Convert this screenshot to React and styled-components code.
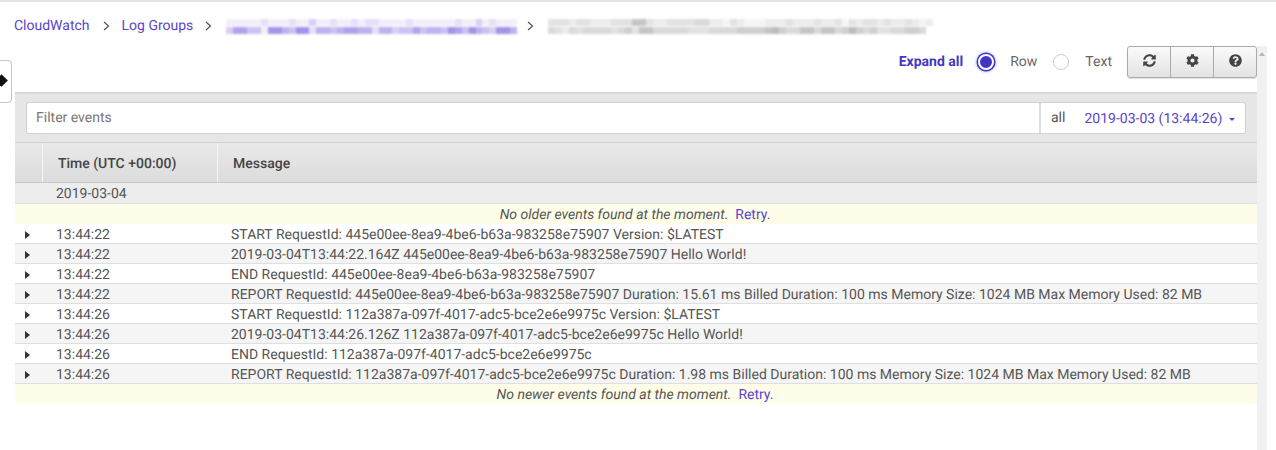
import React from "react";
import styled, { createGlobalStyle } from "styled-components";
import { FaSyncAlt, FaCog, FaQuestionCircle } from "react-icons/fa";

const Global = createGlobalStyle`
  html, body {
    margin: 0;
    background: #ffffff;
    font-family: Roboto, "Liberation Sans", sans-serif;
    color: #555555;
    overflow: hidden;
    text-rendering: geometricPrecision;
  }
`;

const Page = styled.div`
  position: relative;
  width: 1276px;
  height: 450px;
  border-top: 2px solid #e3e3e3;
  box-sizing: border-box;
  overflow: hidden;
`;

const Breadcrumb = styled.nav`
  display: flex;
  align-items: center;
  height: 43px;
  padding: 5px 0 0 14px;
  box-sizing: border-box;
  font-size: 14px;
`;

const Crumb = styled.a`
  color: #5a45c8;
`;

const Chevron = styled.svg`
  width: 7px;
  height: 10px;
  margin: 0 ${(props) => props.$right}px 0 ${(props) => props.$left}px;
  flex: none;
`;

const Redacted = styled.div`
  display: flex;
  flex-direction: column;
  gap: 1px;
  filter: blur(1.2px);
`;

const RedactedRow = styled.div`
  display: flex;
  height: 7px;
`;

const RedactedCell = styled.span`
  width: ${(props) => props.$size}px;
  flex: none;
`;

const Shell = styled.div`
  display: flex;
  margin-left: 15px;
  height: 405px;
`;

const Main = styled.main`
  width: 1242px;
  flex: none;
`;

const Scrollbar = styled.div`
  position: relative;
  width: 10px;
  margin-top: 1px;
  background: #f1f1f1;
  &::before {
    content: "";
    position: absolute;
    top: 6px;
    left: 2px;
    border: 3px solid transparent;
    border-top: 0;
    border-bottom: 4px solid #b5b5b5;
  }
`;

const Toolbar = styled.div`
  display: flex;
  align-items: center;
  justify-content: flex-end;
  height: 47px;
  padding-bottom: 14px;
  box-sizing: border-box;
`;

const ExpandAll = styled.a`
  color: #4338c2;
  font-size: 14px;
  font-weight: 700;
  margin-right: 15px;
`;

const RadioOption = styled.label`
  display: flex;
  align-items: center;
  font-size: 14px;
  line-height: 18px;
  color: #666666;
  margin-right: ${(props) => props.$gap}px;
  padding-top: 1px;
`;

const RadioDot = styled.span`
  width: 16px;
  height: 16px;
  border-radius: 50%;
  box-sizing: border-box;
  margin-right: 16px;
  background: ${(props) => (props.$checked ? "#3f36c4" : "#ffffff")};
  border: ${(props) => (props.$checked ? "2px solid #ffffff" : "1.5px solid #cccccc")};
  box-shadow: ${(props) => (props.$checked ? "0 0 0 1.5px #3f36c4, 0 0 3px 2px #b9b6ee" : "none")};
`;

const ButtonGroup = styled.div`
  display: flex;
  height: 30px;
  border: 1px solid #aaaaaa;
  border-radius: 3px;
  background: linear-gradient(#fafafa, #e3e3e3);
  box-shadow: 0 1px 1px rgba(0, 0, 0, 0.12);
`;

const ToolButton = styled.button`
  width: 43px;
  padding: 0 0 3px;
  border: 0;
  border-right: 1px solid #aaaaaa;
  background: transparent;
  color: #444444;
  font-size: 13px;
  display: flex;
  align-items: center;
  justify-content: center;
  &:last-child {
    width: 42px;
    border-right: 0;
  }
`;

const FilterBar = styled.div`
  height: 51px;
  padding: 8px 11px 9px;
  box-sizing: border-box;
  background: #e6e6e6;
  border-top: 2px solid #dadada;
  border-bottom: 1px solid #d3d3d3;
`;

const FilterBox = styled.div`
  display: flex;
  height: 32px;
  background: #ffffff;
  border: 1px solid #d2d2d2;
  border-radius: 3px;
  box-sizing: border-box;
  font-size: 14px;
`;

const FilterInput = styled.div`
  flex: 1;
  display: flex;
  align-items: center;
  padding-left: 9px;
  color: #777777;
  border-right: 2px solid #dedede;
`;

const RangePicker = styled.div`
  display: flex;
  align-items: center;
  width: 204px;
  box-sizing: border-box;
  padding-left: 10px;
  color: #555555;
`;

const RangeValue = styled.span`
  color: #5a45c8;
  margin: 1px 0 0 19px;
`;

const Caret = styled.span`
  margin-left: 7px;
  margin-top: 2px;
  border: 3px solid transparent;
  border-bottom: 0;
  border-top: 3px solid #5a45c8;
`;

const HeadRow = styled.div`
  display: grid;
  grid-template-columns: 28px 175px 1fr;
  height: 40px;
  background: linear-gradient(#e9e9e9, #dcdcdc);
  border-bottom: 1px solid #c9c9c9;
  box-sizing: border-box;
`;

const HeadCell = styled.div`
  display: flex;
  align-items: center;
  padding: 2px 0 0 ${(props) => props.$pad || 0}px;
  font-size: 14px;
  font-weight: 500;
  color: #444444;
  border-right: ${(props) => (props.$last ? "0" : "1px solid #f5f5f5")};
`;

const DateRow = styled.div`
  height: 21px;
  padding: 1px 0 0 41px;
  background: #ededed;
  border-bottom: 1px solid #e0e0e0;
  box-sizing: border-box;
  font-size: 14px;
  line-height: 21px;
  color: #555555;
`;

const Notice = styled.div`
  height: 20px;
  display: flex;
  justify-content: center;
  align-items: center;
  box-sizing: border-box;
  padding: 2px 2px 0 0;
  background: #fdfde9;
  font-size: 14px;
  font-style: italic;
  color: #555555;
`;

const Retry = styled.a`
  color: #5a45c8;
  font-style: normal;
  margin-left: 7px;
`;

const LogRow = styled.div`
  display: grid;
  grid-template-columns: 41px 175px 1fr;
  align-items: center;
  height: 20px;
  padding-top: 2px;
  box-sizing: border-box;
  border-bottom: 1px solid #dfdfdf;
  background: ${(props) => (props.$odd ? "#f5f5f5" : "#ffffff")};
  font-size: 14px;
  color: #555555;
  white-space: nowrap;
`;

const Arrow = styled.span`
  justify-self: start;
  margin-left: 10px;
  border: 4px solid transparent;
  border-right: 0;
  border-left: 5px solid #333333;
`;

const SideToggle = styled.button`
  position: absolute;
  left: -3px;
  top: 58px;
  width: 15px;
  height: 43px;
  padding: 0;
  overflow: hidden;
  background: #ffffff;
  border: 1px solid #c4c4c4;
  border-radius: 4px;
  &::after {
    content: "";
    position: absolute;
    left: -1px;
    top: 15px;
    width: 9px;
    height: 9px;
    background: #111111;
    transform: rotate(45deg);
  }
`;

const logs = [
  ["13:44:22", "START RequestId: 445e00ee-8ea9-4be6-b63a-983258e75907 Version: $LATEST"],
  ["13:44:22", "2019-03-04T13:44:22.164Z 445e00ee-8ea9-4be6-b63a-983258e75907 Hello World!"],
  ["13:44:22", "END RequestId: 445e00ee-8ea9-4be6-b63a-983258e75907"],
  ["13:44:22", "REPORT RequestId: 445e00ee-8ea9-4be6-b63a-983258e75907 Duration: 15.61 ms Billed Duration: 100 ms Memory Size: 1024 MB Max Memory Used: 82 MB"],
  ["13:44:26", "START RequestId: 112a387a-097f-4017-adc5-bce2e6e9975c Version: $LATEST"],
  ["13:44:26", "2019-03-04T13:44:26.126Z 112a387a-097f-4017-adc5-bce2e6e9975c Hello World!"],
  ["13:44:26", "END RequestId: 112a387a-097f-4017-adc5-bce2e6e9975c"],
  ["13:44:26", "REPORT RequestId: 112a387a-097f-4017-adc5-bce2e6e9975c Duration: 1.98 ms Billed Duration: 100 ms Memory Size: 1024 MB Max Memory Used: 82 MB"],
];

// tones per pixelated block, 0 = blank, 9 = darkest
const purpleRows = [
  "111112111211311211212211112111111211312111",
  "366441775477255456655255344645547647543775",
];
const greyRows = [
  "3332332223336632233334422132111222322232231323323223212",
  "4324344443453664444433344445555675446646645754533445540",
];

const Sep = ({ left = 13, right = 12 }) => (
  <Chevron $left={left} $right={right} viewBox="0 0 7 10">
    <path d="M1 1l4.5 4L1 9" fill="none" stroke="#555" strokeWidth="1.2" />
  </Chevron>
);

const Pixelated = ({ rows, color, size, depth }) => (
  <Redacted>
    {rows.map((row, r) => (
      <RedactedRow key={r}>
        {row.split("").map((tone, c) => (
          <RedactedCell key={c} $size={size} style={{ background: `rgba(${color}, ${tone / depth})` }} />
        ))}
      </RedactedRow>
    ))}
  </Redacted>
);

export default function App() {
  return (
    <Page>
      <Global />
      <Breadcrumb>
        <Crumb>CloudWatch</Crumb>
        <Sep />
        <Crumb>Log Groups</Crumb>
        <Sep left={12} right={14} />
        <Pixelated rows={purpleRows} color="128, 100, 220" size={6.93} depth={10} />
        <Sep left={10} right={14} />
        <Pixelated rows={greyRows} color="130, 130, 135" size={7} depth={13} />
      </Breadcrumb>
      <SideToggle aria-label="Toggle sidebar" />
      <Shell>
        <Main>
          <Toolbar>
            <ExpandAll>Expand all</ExpandAll>
            <RadioOption $gap={16}>
              <RadioDot $checked />
              Row
            </RadioOption>
            <RadioOption $gap={15}>
              <RadioDot />
              Text
            </RadioOption>
            <ButtonGroup>
              <ToolButton aria-label="Refresh"><FaSyncAlt /></ToolButton>
              <ToolButton aria-label="Settings"><FaCog /></ToolButton>
              <ToolButton aria-label="Help"><FaQuestionCircle /></ToolButton>
            </ButtonGroup>
          </Toolbar>
          <FilterBar>
            <FilterBox>
              <FilterInput>Filter events</FilterInput>
              <RangePicker>
                all
                <RangeValue>2019-03-03 (13:44:26)</RangeValue>
                <Caret />
              </RangePicker>
            </FilterBox>
          </FilterBar>
          <HeadRow>
            <HeadCell />
            <HeadCell $pad={15}>Time (UTC +00:00)</HeadCell>
            <HeadCell $pad={15} $last>Message</HeadCell>
          </HeadRow>
          <DateRow>2019-03-04</DateRow>
          <Notice>
            No older events found at the moment.<Retry>Retry.</Retry>
          </Notice>
          {logs.map(([time, message], i) => (
            <LogRow key={i} $odd={i % 2 === 1}>
              <Arrow />
              <span>{time}</span>
              <span>{message}</span>
            </LogRow>
          ))}
          <Notice>
            No newer events found at the moment.<Retry>Retry.</Retry>
          </Notice>
        </Main>
        <Scrollbar />
      </Shell>
    </Page>
  );
}
